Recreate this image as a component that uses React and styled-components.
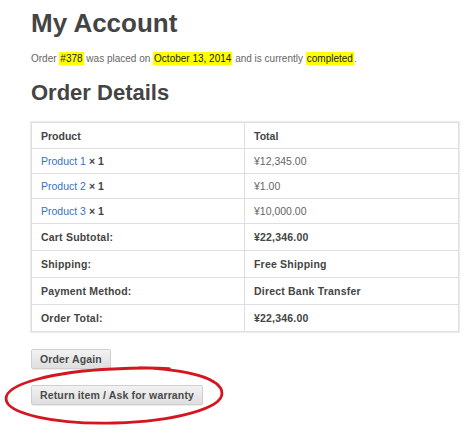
import React from 'react'
import styled, { createGlobalStyle } from 'styled-components'

const GlobalStyle = createGlobalStyle`
  body {
    margin: 0;
    background: #ffffff;
    font-family: "Liberation Sans", Arial, sans-serif;
  }
`

const Page = styled.div`
  padding: 10px 15px 30px 31px;
  color: #666;
`

const Title = styled.h1`
  margin: 0;
  font-family: "Liberation Sans", Arial, sans-serif;
  font-size: 26px;
  line-height: 1;
  font-weight: bold;
  color: #444;
`

const Notice = styled.p`
  margin: 15px 0 0;
  font-size: 10px;
  line-height: 16px;
  color: #666;
`

const Mark = styled.mark`
  background: #ffff00;
  color: #1a1a1a;
  padding: 1px 1px;
`

const SubTitle = styled.h2`
  margin: 15px 0 0;
  font-family: "Liberation Sans", Arial, sans-serif;
  font-size: 22px;
  line-height: 1;
  font-weight: bold;
  color: #444;
`

const Table = styled.table`
  margin-top: 18px;
  width: 428px;
  border-collapse: collapse;
  font-size: 10.5px;
  box-shadow: 0 0 1px 1px #eeeeee;

  td,
  th {
    border: 1px solid #dedede;
    padding: 0 9px;
    text-align: left;
    vertical-align: middle;
  }

  th {
    height: 25px;
    font-weight: bold;
    color: #444;
  }

  tbody td {
    height: 24px;
  }

  tfoot td {
    height: 26px;
    font-weight: bold;
    color: #444;
    letter-spacing: 0.2px;
  }
`

const FirstCol = styled.col`
  width: 213px;
`

const ProductLink = styled.a`
  color: #3673bd;
  text-decoration: none;
`

const Qty = styled.strong`
  color: #444;
`

const Price = styled.span`
  color: #666;
`

const Actions = styled.div`
  display: flex;
  flex-direction: column;
  align-items: flex-start;
  gap: 16px;
  margin-top: 17px;
`

const Highlighted = styled.div`
  position: relative;
`

const Button = styled.button`
  display: block;
  height: 20px;
  padding: 0 8px;
  font-family: "Liberation Sans", Arial, sans-serif;
  font-size: 10.5px;
  font-weight: bold;
  letter-spacing: 0.15px;
  color: #4a4a4a;
  background: linear-gradient(#f2f2f2, #dedede);
  border: 1px solid #cfcfcf;
  border-radius: 2px;
  box-shadow: 0 1px 1px rgba(0, 0, 0, 0.08);
`

/* hand-drawn ring around the return button */
const Ring = styled.svg`
  position: absolute;
  left: -31px;
  top: -19px;
  width: 240px;
  height: 64px;
  overflow: visible;
  pointer-events: none;
`

const items = [
  { name: 'Product 1', total: '¥12,345.00' },
  { name: 'Product 2', total: '¥1.00' },
  { name: 'Product 3', total: '¥10,000.00' },
]

const totals = [
  ['Cart Subtotal:', '¥22,346.00'],
  ['Shipping:', 'Free Shipping'],
  ['Payment Method:', 'Direct Bank Transfer'],
  ['Order Total:', '¥22,346.00'],
]

export default function App() {
  return (
    <>
      <GlobalStyle />
      <Page>
        <Title>My Account</Title>
        <Notice>
          Order <Mark>#378</Mark> was placed on <Mark>October 13, 2014</Mark> and is
          currently <Mark>completed</Mark>.
        </Notice>
        <SubTitle>Order Details</SubTitle>
        <Table>
          <colgroup>
            <FirstCol />
            <col />
          </colgroup>
          <thead>
            <tr>
              <th>Product</th>
              <th>Total</th>
            </tr>
          </thead>
          <tbody>
            {items.map((item) => (
              <tr key={item.name}>
                <td>
                  <ProductLink href="#">{item.name}</ProductLink> <Qty>× 1</Qty>
                </td>
                <td>
                  <Price>{item.total}</Price>
                </td>
              </tr>
            ))}
          </tbody>
          <tfoot>
            {totals.map(([label, value]) => (
              <tr key={label}>
                <td>{label}</td>
                <td>{value}</td>
              </tr>
            ))}
          </tfoot>
        </Table>
        <Actions>
          <Button>Order Again</Button>
          <Highlighted>
            <Button>Return item / Ask for warranty</Button>
            <Ring viewBox="0 0 240 64">
              <path
                d="M170 4 C 150 2.5, 130 2.5, 114 3 C 54 4, 6 15, 6 30 C 6 45, 54 57, 114 57 C 174 57, 222 45, 222 30 C 222 16, 190 5, 140 2.5"
                fill="none"
                stroke="#d3161f"
                strokeWidth="2.8"
                strokeLinecap="round"
                transform="rotate(-1.5 114 30)"
              />
            </Ring>
          </Highlighted>
        </Actions>
      </Page>
    </>
  )
}
